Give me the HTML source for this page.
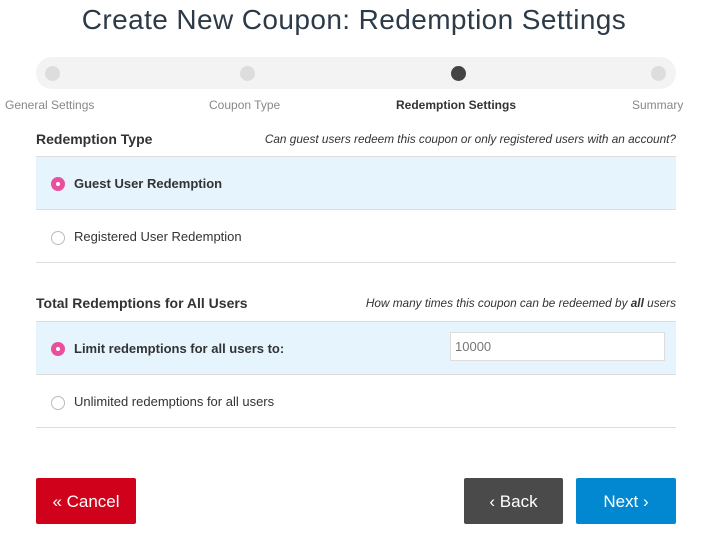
<!DOCTYPE html>
<html><head><style>
*{margin:0;padding:0;box-sizing:border-box}
body{width:708px;height:552px;background:#fff;font-family:"Liberation Sans",sans-serif;position:relative;overflow:hidden;color:#333}
.a{position:absolute}
h1{position:absolute;left:0;width:708px;top:4px;text-align:center;font-weight:normal;font-size:28px;color:#2d3a48;letter-spacing:0.4px}
.bar{left:36px;top:57px;width:640px;height:32px;background:#f3f3f3;border-radius:16px}
.dot{width:15px;height:15px;border-radius:50%;background:#ddd;top:66px}
.lbl{top:98px;font-size:12px;color:#888;white-space:nowrap}
.h{font-size:14px;font-weight:bold;color:#333}
.it{font-size:11.8px;font-style:italic;color:#333;right:32px;text-align:right;white-space:nowrap}
.row{left:36px;width:640px;border-bottom:1px solid #ddd}
.sel{background:#e6f4fd;border-top:1px solid #ddd}
.radio{width:14px;height:14px;border-radius:50%;border:1px solid #bbb;background:#fff}
.radio.on{background:#e94f9e;border:none}
.radio.on:after{content:"";position:absolute;left:5px;top:5px;width:4px;height:4px;border-radius:50%;background:#fff}
.t{font-size:13px;color:#333}
.btn{top:478px;height:46px;color:#fff;font-size:17px;text-align:center;line-height:47px;border-radius:2px}
</style></head><body>
<h1>Create New Coupon: Redemption Settings</h1>
<div class="a bar"></div>
<div class="a dot" style="left:45px"></div>
<div class="a dot" style="left:240px"></div>
<div class="a dot" style="left:451px;background:#444"></div>
<div class="a dot" style="left:651px"></div>
<div class="a lbl" style="left:5px">General Settings</div>
<div class="a lbl" style="left:209px">Coupon Type</div>
<div class="a lbl" style="left:396px;font-weight:bold;color:#333">Redemption Settings</div>
<div class="a lbl" style="left:632px">Summary</div>

<div class="a h" style="left:36px;top:131px">Redemption Type</div>
<div class="a it" style="top:132px">Can guest users redeem this coupon or only registered users with an account?</div>
<div class="a row sel" style="top:156px;height:54px"></div>
<div class="a radio on" style="left:51px;top:177px"></div>
<div class="a t" style="left:74px;top:176px;font-weight:bold">Guest User Redemption</div>
<div class="a row" style="top:210px;height:53px"></div>
<div class="a radio" style="left:51px;top:231px"></div>
<div class="a t" style="left:74px;top:229px">Registered User Redemption</div>

<div class="a h" style="left:36px;top:295px">Total Redemptions for All Users</div>
<div class="a it" style="top:296px">How many times this coupon can be redeemed by <b>all</b> users</div>
<div class="a row sel" style="top:321px;height:54px"></div>
<div class="a radio on" style="left:51px;top:342px"></div>
<div class="a t" style="left:74px;top:341px;font-weight:bold">Limit redemptions for all users to:</div>
<div class="a" style="left:450px;top:332px;width:215px;height:29px;background:#fff;border:1px solid #ddd;font-size:13px;color:#777;padding:6px 4px">10000</div>
<div class="a row" style="top:375px;height:53px"></div>
<div class="a radio" style="left:51px;top:396px"></div>
<div class="a t" style="left:74px;top:394px">Unlimited redemptions for all users</div>

<div class="a btn" style="left:36px;width:100px;background:#d0021b">« Cancel</div>
<div class="a btn" style="left:464px;width:99px;background:#4a4a4a">‹ Back</div>
<div class="a btn" style="left:576px;width:100px;background:#0288d1">Next ›</div>
</body></html>
